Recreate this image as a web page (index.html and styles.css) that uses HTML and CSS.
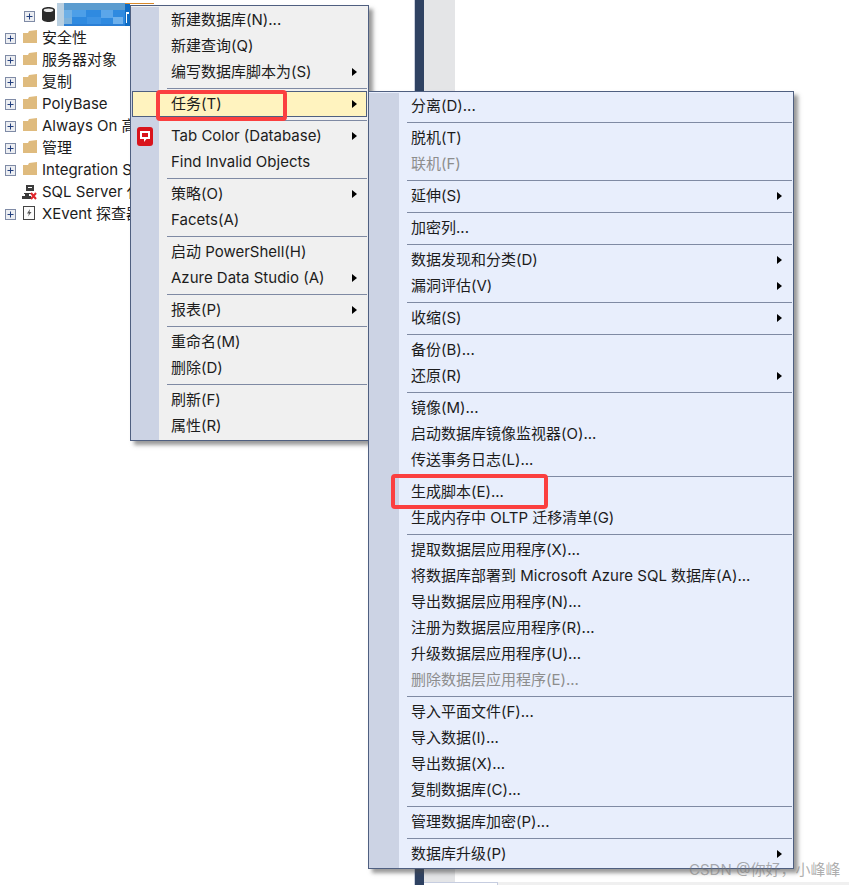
FILE: index.html
```html
<!DOCTYPE html>
<html lang="zh-CN">
<head>
<meta charset="utf-8">
<title>SSMS 任务菜单</title>
<link rel="stylesheet" href="styles.css">
</head>
<body>
<div class="stage">
  <div class="tree">
    <div class="row row-db">
      <svg class="plus" viewBox="0 0 11 11"><rect x=".5" y=".5" width="10" height="10" fill="#eceef2" stroke="#7f8ba6"/><path d="M2.500 5.500h6M5.500 2.500v6" stroke="#24407f"/></svg>
      <svg class="dbicon" viewBox="0 0 13 15"><path d="M0 3c0-4 13-4 13 0v9c0 4-13 4-13 0z" fill="#2b2b2b"/><ellipse cx="6.500" cy="3.200" rx="4.800" ry="1.800" fill="#e8e8e8"/></svg>
      <svg class="mosaic" viewBox="0 0 97 23" shape-rendering="crispEdges">
        <rect width="68" height="23" fill="#2f8ae0"/>
        <rect width="7" height="23" fill="#b9cfe0"/>
        <rect x="7" width="61" height="7" fill="#5c9ccf"/>
        <rect x="7" y="7" width="8" height="8" fill="#6fb0e6"/>
        <rect x="15" y="7" width="14" height="7" fill="#4d9fe8"/>
        <rect x="44" y="7" width="12" height="8" fill="#5ba6ea"/>
        <rect x="56" y="14" width="10" height="7" fill="#6db0ec"/>
        <rect x="7" y="15" width="8" height="7" fill="#7db2dc"/>
        <rect x="30" y="14" width="14" height="8" fill="#3d93e4"/>
        <rect x="7" y="21" width="61" height="2" fill="#2a7fd6"/>
        <rect x="68" y="0" width="5" height="23" fill="#0f6cc4"/>
        <rect x="69" y="9" width="1" height="11" fill="#fff"/>
        <rect x="70" y="9" width="2" height="2" fill="#fff"/>
        <rect x="68" y="0" width="29" height="1" fill="#d98a2b"/>
      </svg>
    </div>
    <div class="row"><svg class="plus" viewBox="0 0 11 11"><rect x=".5" y=".5" width="10" height="10" fill="#eceef2" stroke="#7f8ba6"/><path d="M2.500 5.500h6M5.500 2.500v6" stroke="#24407f"/></svg><svg class="folder" viewBox="0 0 14 13"><path d="M0 3h5l1-2 8-1v13H0z" fill="#dfbb7e"/></svg><span>安全性</span></div>
    <div class="row"><svg class="plus" viewBox="0 0 11 11"><rect x=".5" y=".5" width="10" height="10" fill="#eceef2" stroke="#7f8ba6"/><path d="M2.500 5.500h6M5.500 2.500v6" stroke="#24407f"/></svg><svg class="folder" viewBox="0 0 14 13"><path d="M0 3h5l1-2 8-1v13H0z" fill="#dfbb7e"/></svg><span>服务器对象</span></div>
    <div class="row"><svg class="plus" viewBox="0 0 11 11"><rect x=".5" y=".5" width="10" height="10" fill="#eceef2" stroke="#7f8ba6"/><path d="M2.500 5.500h6M5.500 2.500v6" stroke="#24407f"/></svg><svg class="folder" viewBox="0 0 14 13"><path d="M0 3h5l1-2 8-1v13H0z" fill="#dfbb7e"/></svg><span>复制</span></div>
    <div class="row"><svg class="plus" viewBox="0 0 11 11"><rect x=".5" y=".5" width="10" height="10" fill="#eceef2" stroke="#7f8ba6"/><path d="M2.500 5.500h6M5.500 2.500v6" stroke="#24407f"/></svg><svg class="folder" viewBox="0 0 14 13"><path d="M0 3h5l1-2 8-1v13H0z" fill="#dfbb7e"/></svg><span>PolyBase</span></div>
    <div class="row"><svg class="plus" viewBox="0 0 11 11"><rect x=".5" y=".5" width="10" height="10" fill="#eceef2" stroke="#7f8ba6"/><path d="M2.500 5.500h6M5.500 2.500v6" stroke="#24407f"/></svg><svg class="folder" viewBox="0 0 14 13"><path d="M0 3h5l1-2 8-1v13H0z" fill="#dfbb7e"/></svg><span>Always On 高可用性</span></div>
    <div class="row"><svg class="plus" viewBox="0 0 11 11"><rect x=".5" y=".5" width="10" height="10" fill="#eceef2" stroke="#7f8ba6"/><path d="M2.500 5.500h6M5.500 2.500v6" stroke="#24407f"/></svg><svg class="folder" viewBox="0 0 14 13"><path d="M0 3h5l1-2 8-1v13H0z" fill="#dfbb7e"/></svg><span>管理</span></div>
    <div class="row"><svg class="plus" viewBox="0 0 11 11"><rect x=".5" y=".5" width="10" height="10" fill="#eceef2" stroke="#7f8ba6"/><path d="M2.500 5.500h6M5.500 2.500v6" stroke="#24407f"/></svg><svg class="folder" viewBox="0 0 14 13"><path d="M0 3h5l1-2 8-1v13H0z" fill="#dfbb7e"/></svg><span>Integration Services</span></div>
    <div class="row row-noplus"><svg class="agent" viewBox="0 0 15 15"><rect x="4" y="0" width="8" height="6" fill="#3c3c3c"/><rect x="6" y="2" width="4" height="1" fill="#fff"/><path d="M3 7h7v1H8v2h2v3H1v-3h3V8H3z" fill="#3c3c3c" transform="translate(-1 1)"/><path d="M9 8l5 6M14 8l-5 6" stroke="#e0262b" stroke-width="2"/></svg><span>SQL Server 代理</span></div>
    <div class="row row-xe"><svg class="plus" viewBox="0 0 11 11"><rect x=".5" y=".5" width="10" height="10" fill="#eceef2" stroke="#7f8ba6"/><path d="M2.500 5.500h6M5.500 2.500v6" stroke="#24407f"/></svg><svg class="xevent" viewBox="0 0 13 14"><rect x=".5" y=".5" width="11" height="13" fill="#fbfbfb" stroke="#444"/><path d="M7 3L4 7.500h2L5 10.500l3.500-4.500H6.500z" fill="#555"/></svg><span>XEvent 探查器</span></div>
  </div>
  <div class="split"></div>
  <div class="side">
    <div class="side-main"><div class="gray"></div></div>
    <div class="tabstrip"><div class="tab"></div></div>
  </div>
</div>

<div class="menu menu-main">
  <div class="gutter">
    <svg class="qicon" viewBox="0 0 16 19"><rect width="16" height="19" rx="3" fill="#d9141c"/><path d="M3 4h10v8H9.500L7 15v-3H3z" fill="#fff"/><path d="M5 6h6v4H5z" fill="#d9141c"/></svg>
  </div>
  <div class="body">
    <div class="item">新建数据库(N)...</div>
    <div class="item">新建查询(Q)</div>
    <div class="item has-sub">编写数据库脚本为(S)</div>
    <div class="sep"></div>
    <div class="item has-sub active">任务(T)</div>
    <div class="sep"></div>
    <div class="item has-sub">Tab Color (Database)</div>
    <div class="item">Find Invalid Objects</div>
    <div class="sep"></div>
    <div class="item has-sub">策略(O)</div>
    <div class="item">Facets(A)</div>
    <div class="sep"></div>
    <div class="item">启动 PowerShell(H)</div>
    <div class="item has-sub">Azure Data Studio (A)</div>
    <div class="sep"></div>
    <div class="item has-sub">报表(P)</div>
    <div class="sep"></div>
    <div class="item">重命名(M)</div>
    <div class="item">删除(D)</div>
    <div class="sep"></div>
    <div class="item">刷新(F)</div>
    <div class="item">属性(R)</div>
  </div>
</div>

<div class="menu menu-sub">
  <div class="gutter"></div>
  <div class="body">
    <div class="item">分离(D)...</div>
    <div class="sep"></div>
    <div class="item">脱机(T)</div>
    <div class="item disabled">联机(F)</div>
    <div class="sep"></div>
    <div class="item has-sub">延伸(S)</div>
    <div class="sep"></div>
    <div class="item">加密列...</div>
    <div class="sep"></div>
    <div class="item has-sub">数据发现和分类(D)</div>
    <div class="item has-sub">漏洞评估(V)</div>
    <div class="sep"></div>
    <div class="item has-sub">收缩(S)</div>
    <div class="sep"></div>
    <div class="item">备份(B)...</div>
    <div class="item has-sub">还原(R)</div>
    <div class="sep"></div>
    <div class="item">镜像(M)...</div>
    <div class="item">启动数据库镜像监视器(O)...</div>
    <div class="item">传送事务日志(L)...</div>
    <div class="sep"></div>
    <div class="item">生成脚本(E)...</div>
    <div class="item">生成内存中 OLTP 迁移清单(G)</div>
    <div class="sep"></div>
    <div class="item">提取数据层应用程序(X)...</div>
    <div class="item">将数据库部署到 Microsoft Azure SQL 数据库(A)...</div>
    <div class="item">导出数据层应用程序(N)...</div>
    <div class="item">注册为数据层应用程序(R)...</div>
    <div class="item">升级数据层应用程序(U)...</div>
    <div class="item disabled">删除数据层应用程序(E)...</div>
    <div class="sep"></div>
    <div class="item">导入平面文件(F)...</div>
    <div class="item">导入数据(I)...</div>
    <div class="item">导出数据(X)...</div>
    <div class="item">复制数据库(C)...</div>
    <div class="sep"></div>
    <div class="item">管理数据库加密(P)...</div>
    <div class="sep"></div>
    <div class="item has-sub">数据库升级(P)</div>
  </div>
</div>

<div class="mark mark-task"></div>
<div class="mark mark-script"></div>
<div class="watermark">CSDN @你好，小峰峰</div>
</body>
</html>
```
FILE: styles.css
```css
* { box-sizing: border-box; }
html, body { margin: 0; height: 100%; overflow: hidden; background: #fff; }
body {
  font-family: "Inter", "Noto Sans CJK SC", sans-serif;
  font-size: 15px;
  color: #1c1c1c;
}
.stage { display: flex; width: 849px; height: 885px; }

.tree { width: 414px; padding-top: 5px; overflow: hidden; flex: none; }
.row {
  display: flex; align-items: center; height: 22px;
  padding-left: 5px; white-space: nowrap; line-height: 20px;
}
.row span { margin-left: 5px; }
.row-db { padding-left: 24px; position: relative; }
.plus { width: 11px; height: 11px; flex: none; margin-right: 6px; }
.dbicon { width: 13px; height: 15px; flex: none; margin-left: 1px; margin-top: -3px; }
.mosaic { width: 97px; height: 23px; flex: none; margin-left: 2px; margin-top: -3px; }
.folder { width: 14px; height: 13px; flex: none; margin-top: -3px; margin-left: 1px; }
.row-noplus { padding-left: 22px; }
.agent { width: 15px; height: 15px; flex: none; }
.xevent { width: 13px; height: 14px; flex: none; margin-left: 1px; margin-top: -2px; }
.row-xe span { margin-left: 6px; }

.split { width: 10px; flex: none; background: #2f4262; border-left: 1px solid #c9cfdd; border-right: 1px solid #2f4262; }
.side { flex: 1; display: flex; flex-direction: column; }
.side-main { flex: 1; display: flex; }
.gray { width: 31px; background: #e4e5e7; }
.tabstrip { height: 3px; background: #f0f0f0; }
.tab { width: 74px; height: 3px; background: #fff; border-top: 1px solid #c6cde0; border-right: 1px solid #c6cde0; }

.menu {
  position: absolute; display: flex;
  border: 1px solid #4f5f80;
  box-shadow: 4px 4px 4px rgba(70, 70, 70, .55);
}
.menu-main { left: 130px; top: 5px; width: 239px; height: 436px; background: #f0f0f0; }
.menu-sub { left: 368px; top: 91px; width: 426px; height: 778px; background: #e8eefc; }
.gutter { flex: none; background: #ccd3e4; margin-top: 1px; }
.menu-main .gutter { width: 28px; position: relative; }
.menu-sub .gutter { width: 30px; }
.qicon { position: absolute; left: 6px; top: 120px; width: 16px; height: 19px; }
.body { flex: 1; padding-top: 1px; min-width: 0; }

.item {
  position: relative; height: 26px; line-height: 26px;
  padding-left: 12px; white-space: nowrap; font-size: 15px;
}
.has-sub::after {
  content: ""; position: absolute; right: 11px; top: 9px;
  border-left: 5px solid #000;
  border-top: 4px solid transparent; border-bottom: 4px solid transparent;
}
.active {
  margin-left: -27px; margin-right: 1px; padding-left: 38px;
  background: #fff3bf; border: 1px solid #4f5f80; line-height: 24px;
}
.active::after { top: 8px; right: 9px; }
.disabled { color: #8d8d8d; }
.sep { height: 1px; margin: 3px 1px 2px 8px; background: #7f8aa3; }

.mark {
  position: absolute; border: 4px solid #fb3f3f; border-radius: 4px;
}
.mark-task { left: 156px; top: 90px; width: 131px; height: 31px; }
.mark-script { left: 391px; top: 474px; width: 157px; height: 35px; }

.watermark {
  position: absolute; left: 689px; top: 858px; line-height: 24px; font-size: 15px;
  color: rgba(120, 120, 120, .6); white-space: nowrap;
}
```
